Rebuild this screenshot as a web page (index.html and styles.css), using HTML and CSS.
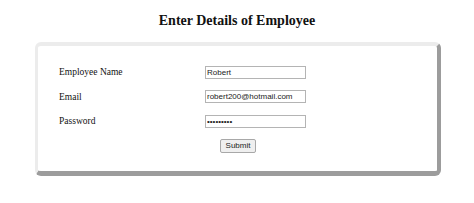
FILE: index.html
```html
<!DOCTYPE html>
<html lang="en">
<head>
    <meta charset="UTF-8">
    <meta name="viewport" content="width=device-width, initial-scale=1.0">
    <title>Employee Details</title>
    <link rel="stylesheet" href="styles.css">
</head>
<body>
    <h1 class="title">Enter Details of Employee</h1>

    <div class="card">
        <form class="emp-form">
            <label for="emp-name">Employee Name</label>
            <input type="text" id="emp-name" value="Robert">

            <label for="emp-email">Email</label>
            <input type="text" id="emp-email" value="robert200@hotmail.com">

            <label for="emp-pass">Password</label>
            <input type="password" id="emp-pass" value="robert200">

            <div class="submit-row">
                <button type="button" class="submit-btn">Submit</button>
            </div>
        </form>
    </div>
</body>
</html>
```

FILE: styles.css
```css
body {
    font-family: "Liberation Serif", "Times New Roman", serif;
    background: #fff;
    margin: 0;
    padding: 0;
    color: #111;
}
.title {
    font-size: 14px;
    line-height: 16px;
    text-align: center;
    margin: 13px 0 13px;
}
.card {
    margin: 0 33px 0 35px;
    border-style: solid;
    border-width: 4px 4px 5px 3px;
    border-color: #ececec #9c9c9c #9c9c9c #ececec;
    border-radius: 6px;
    padding: 14px 20px 13px 21px;
}
.emp-form {
    display: grid;
    grid-template-columns: 146px 101px;
    grid-auto-rows: 24.5px;
    align-items: center;
}
label {
    font-size: 9.5px;
}
input[type="text"], input[type="password"] {
    box-sizing: border-box;
    width: 101px;
    height: 13px;
    padding: 0 1px;
    margin: 0;
    border: 1px solid #b4b4b4;
    font-family: "Liberation Sans", Arial, sans-serif;
    font-size: 8px;
    color: #222;
}
.submit-row {
    grid-column: 1 / -1;
    width: 358px;
    display: flex;
    justify-content: center;
}
.submit-btn {
    box-sizing: border-box;
    width: 36px;
    height: 14px;
    padding: 0;
    background-color: #efefef;
    border: 1px solid #a8a8a8;
    border-radius: 2px;
    font-family: "Liberation Sans", Arial, sans-serif;
    font-size: 8px;
    color: #222;
}
```
